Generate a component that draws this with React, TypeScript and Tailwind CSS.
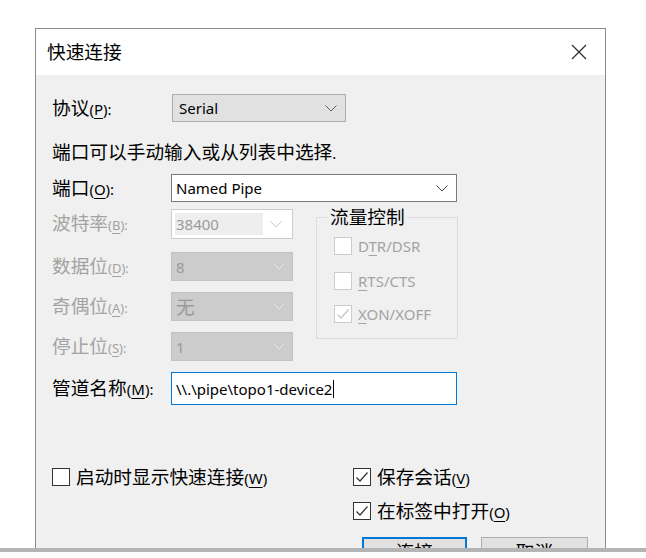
import type {ReactNode} from 'react';

function Zh({children}: {children: ReactNode}) {
  return <span className="text-[18.7px]">{children}</span>;
}

function Key({children}: {children: ReactNode}) {
  return <span className="underline underline-offset-[3px] decoration-1">{children}</span>;
}

function Chevron({color = '#5f5f5f'}: {color?: string}) {
  return (
    <svg width="12" height="7" viewBox="0 0 12 7" className="shrink-0">
      <polyline points="0.5,0.5 6,6 11.5,0.5" fill="none" stroke={color} strokeWidth="1" />
    </svg>
  );
}

function Check({color}: {color: string}) {
  return (
    <svg width="16" height="16" viewBox="0 0 16 16">
      <polyline points="2.5,8.5 6,12 13.5,3.5" fill="none" stroke={color} strokeWidth="1.2" />
    </svg>
  );
}

function Box({checked, disabled}: {checked?: boolean; disabled?: boolean}) {
  return (
    <span
      className={
        'flex size-[18px] shrink-0 items-center justify-center border bg-white ' +
        (disabled ? 'border-[#cccccc]' : 'border-[#333333]')
      }
    >
      {checked && <Check color={disabled ? '#c4c4c4' : '#333333'} />}
    </span>
  );
}

function DisabledLabel({zh, k}: {zh: string; k: string}) {
  return (
    <span className="w-[119px] shrink-0 text-[#a3a3a3]">
      <Zh>{zh}</Zh>
      <span className="text-[13px]">
        (<Key>{k}</Key>):
      </span>
    </span>
  );
}

function DisabledSelect({value, zhValue}: {value: string; zhValue?: boolean}) {
  return (
    <div className="flex h-[29px] w-[122px] items-center justify-between border border-[#c2c2c2] bg-[#cccccc] pl-[4px] pr-[7px] text-[#9a9a9a]">
      {zhValue ? <Zh>{value}</Zh> : <span>{value}</span>}
      <Chevron color="#e4e4e4" />
    </div>
  );
}

function FlowItem({label, k, before = '', checked}: {label: string; k: string; before?: string; checked?: boolean}) {
  const after = label.slice(before.length + 1);
  return (
    <div className="flex h-[24px] items-center gap-[6px] text-[#a3a3a3]">
      <Box disabled checked={checked} />
      <span>
        {before}
        <Key>{k}</Key>
        {after}
      </span>
    </div>
  );
}

export default function App() {
  return (
    <div className="flex h-[558px] w-[646px] flex-col overflow-hidden bg-white font-['Noto_Sans','Noto_Sans_CJK_SC',sans-serif] text-[15px] leading-[24px] text-black">
      <div className="h-[548px] shrink-0 overflow-hidden pl-[35px] pt-[28px]">
        <div className="h-[600px] w-[571px] border border-[#8a8a8a] bg-[#f0f0f0]">
          {/* title bar */}
          <div className="flex h-[46px] items-center justify-between bg-white pl-[11px] pr-[18px]">
            <Zh>快速连接</Zh>
            <svg width="16" height="16" viewBox="0 0 16 16">
              <path d="M1 1L15 15M15 1L1 15" stroke="#2b2b2b" strokeWidth="1.2" />
            </svg>
          </div>

          <div className="pl-[16px]">
            {/* protocol */}
            <div className="mt-[19px] flex h-[28px] items-center">
              <span className="w-[120px] shrink-0">
                <Zh>协议</Zh>(<Key>P</Key>):
              </span>
              <div className="flex h-[28px] w-[174px] items-center justify-between border border-[#adadad] bg-[#e1e1e1] pl-[6px] pr-[8px]">
                <span>Serial</span>
                <Chevron />
              </div>
            </div>

            <div className="mt-[18px] h-[24px]">
              <Zh>端口可以手动输入或从列表中选择</Zh>.
            </div>

            {/* port */}
            <div className="mt-[10px] flex h-[28px] items-center">
              <span className="w-[119px] shrink-0">
                <Zh>端口</Zh>(<Key>O</Key>):
              </span>
              <div className="flex h-[28px] w-[286px] items-center justify-between border border-[#7a7a7a] bg-white pl-[4px] pr-[8px]">
                <span>Named Pipe</span>
                <Chevron color="#444444" />
              </div>
            </div>

            {/* serial settings + flow control */}
            <div className="mt-[7px] flex items-start">
              <div className="flex w-[241px] shrink-0 flex-col">
                <div className="flex h-[30px] items-center">
                  <DisabledLabel zh="波特率" k="B" />
                  <div className="flex h-[30px] w-[122px] items-center border border-[#cccccc] bg-white p-[3px]">
                    <div className="flex h-full w-[88px] items-center bg-[#eeeeee] pl-[1px] text-[#9a9a9a]">38400</div>
                    <div className="flex flex-1 justify-center">
                      <Chevron color="#c6c6c6" />
                    </div>
                  </div>
                </div>
                <div className="mt-[13px] flex h-[29px] items-center">
                  <DisabledLabel zh="数据位" k="D" />
                  <DisabledSelect value="8" />
                </div>
                <div className="mt-[11px] flex h-[29px] items-center">
                  <DisabledLabel zh="奇偶位" k="A" />
                  <DisabledSelect value="无" zhValue />
                </div>
                <div className="mt-[11px] flex h-[29px] items-center">
                  <DisabledLabel zh="停止位" k="S" />
                  <DisabledSelect value="1" />
                </div>
              </div>

              <fieldset className="ml-[23px] mt-[-4px] w-[142px] border border-[#dcdcdc] pb-[12px] pt-[4px]">
                <legend className="ml-[10px] px-[3px] leading-[24px]">
                  <Zh>流量控制</Zh>
                </legend>
                <div className="pl-[17px]">
                  <FlowItem label="DTR/DSR" before="D" k="T" />
                  <div className="mt-[11px]">
                    <FlowItem label="RTS/CTS" k="R" />
                  </div>
                  <div className="mt-[9px]">
                    <FlowItem label="XON/XOFF" k="X" checked />
                  </div>
                </div>
              </fieldset>
            </div>

            {/* pipe name */}
            <div className="mt-[11px] flex h-[33px] items-center">
              <span className="w-[119px] shrink-0">
                <Zh>管道名称</Zh>(<Key>M</Key>):
              </span>
              <div className="flex h-[33px] w-[286px] items-center border border-[#0078d7] bg-white pl-[4px]">
                <span>\\.\pipe\topo1-device2</span>
                <span className="ml-[1px] h-[18px] w-px bg-black" />
              </div>
            </div>

            {/* options */}
            <div className="mt-[60px] flex h-[24px] items-center">
              <div className="flex w-[301px] shrink-0 items-center gap-[6px]">
                <Box />
                <span>
                  <Zh>启动时显示快速连接</Zh>(<Key>W</Key>)
                </span>
              </div>
              <div className="flex items-center gap-[6px]">
                <Box checked />
                <span>
                  <Zh>保存会话</Zh>(<Key>V</Key>)
                </span>
              </div>
            </div>
            <div className="mt-[10px] flex h-[24px] items-center pl-[301px]">
              <div className="flex items-center gap-[6px]">
                <Box checked />
                <span>
                  <Zh>在标签中打开</Zh>(<Key>O</Key>)
                </span>
              </div>
            </div>

            {/* buttons */}
            <div className="mt-[14px] flex justify-end gap-[14px] pr-[17px]">
              <button className="flex h-[30px] w-[105px] items-center justify-center border-2 border-[#0078d7] bg-[#e1e1e1]">
                <Zh>连接</Zh>
              </button>
              <button className="flex h-[30px] w-[107px] items-center justify-center border border-[#adadad] bg-[#e1e1e1]">
                <Zh>取消</Zh>
              </button>
            </div>
          </div>
        </div>
      </div>
      <div className="h-[4px] shrink-0 bg-[#b4b4b4]" />
      <div className="flex-1 bg-white" />
    </div>
  );
}
